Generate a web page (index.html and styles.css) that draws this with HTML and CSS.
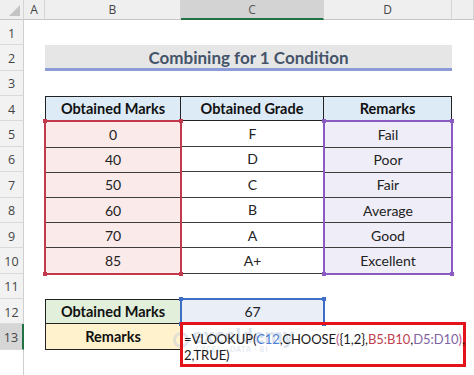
FILE: index.html
```html
<!DOCTYPE html>
<html>
<head>
<meta charset="utf-8">
<link rel="stylesheet" href="styles.css">
</head>
<body>
<div class="sheet">
  <div class="corner"><span class="tri"></span></div>
  <div class="ch">A</div>
  <div class="ch">B</div>
  <div class="ch sel">C</div>
  <div class="ch">D</div>
  <div class="ch"></div>

  <div class="rh">1</div><div class="blank span5"></div>

  <div class="rh">2</div><div class="blank"></div>
  <div class="title">Combining for 1 Condition</div>
  <div class="blank"></div>

  <div class="rh">3</div><div class="blank span5"></div>

  <div class="rh">4</div><div class="blank"></div>
  <div class="th first">Obtained Marks</div>
  <div class="th">Obtained Grade</div>
  <div class="th">Remarks</div>
  <div class="blank"></div>

  <div class="rh">5</div><div class="blank"></div>
  <div class="range red">
    <div class="rc">0</div><div class="rc">40</div><div class="rc">50</div>
    <div class="rc">60</div><div class="rc">70</div><div class="rc last">85</div>
    <span class="h tl"></span><span class="h tr"></span><span class="h bl"></span><span class="h br"></span>
  </div>
  <div class="td">F</div>
  <div class="range purple">
    <div class="rc">Fail</div><div class="rc">Poor</div><div class="rc">Fair</div>
    <div class="rc">Average</div><div class="rc">Good</div><div class="rc last">Excellent</div>
    <span class="h tl"></span><span class="h tr"></span><span class="h bl"></span><span class="h br"></span>
  </div>
  <div class="blank"></div>

  <div class="rh">6</div><div class="blank"></div><div class="td">D</div><div class="blank"></div>
  <div class="rh">7</div><div class="blank"></div><div class="td">C</div><div class="blank"></div>
  <div class="rh">8</div><div class="blank"></div><div class="td">B</div><div class="blank"></div>
  <div class="rh">9</div><div class="blank"></div><div class="td">A</div><div class="blank"></div>
  <div class="rh">10</div><div class="blank"></div><div class="td">A+</div><div class="blank"></div>

  <div class="rh">11</div><div class="blank span5"></div>

  <div class="rh">12</div><div class="blank"></div>
  <div class="lbl green">Obtained Marks</div>
  <div class="range blue">67
    <span class="h tl"></span><span class="h tr"></span><span class="h bl"></span><span class="h br"></span>
  </div>
  <div class="blank span2"></div>

  <div class="rh sel">13</div><div class="blank"></div>
  <div class="lbl yellow">Remarks</div>
  <div class="editcell">
    <div class="watermark">
      <span class="wm-logo"></span>
      <span class="wm-text"><span class="wm-name">exceldemy</span><span class="wm-sub">EXCEL · DATA · BI</span></span>
    </div>
    <div class="editbox">=VLOOKUP(<span class="f-blue">C12</span>,CHOOSE<span class="f-pink">(</span>{1,2},<span class="f-red">B5:B10</span>,<span class="f-purple">D5:D10</span><span class="f-pink">)</span>,<br>2,TRUE)</div>
  </div>
  <div class="blank span2"></div>

  <div class="rh empty"></div><div class="blank span5"></div>
</div>
</body>
</html>
```

FILE: styles.css
```css
* { box-sizing: border-box; margin: 0; padding: 0; }

body {
  margin: 0;
  width: 474px;
  height: 375px;
  overflow: hidden;
  background: #fff;
  font-family: Lato, "Open Sans", "Liberation Sans", sans-serif;
  color: #1f1f1f;
}

.sheet {
  display: grid;
  grid-template-columns: 24px 21px 136px 143px 128px 22px;
  grid-template-rows: 20px repeat(14, 1fr);
  height: 375px;
}

.corner {
  background: #efefef;
  border-right: 1px solid #d4d4d4;
  border-bottom: 1px solid #c6c6c6;
  position: relative;
}
.tri {
  position: absolute;
  right: 3px;
  bottom: 3px;
  width: 0;
  height: 0;
  border-left: 11px solid transparent;
  border-bottom: 11px solid #c4c4c4;
}

.ch {
  background: #efefef;
  border-right: 1px solid #d4d4d4;
  border-bottom: 1px solid #c6c6c6;
  font-family: "Open Sans", sans-serif;
  font-size: 12px;
  color: #444;
  display: flex;
  align-items: center;
  justify-content: center;
}
.ch.sel {
  background: #d3d3d3;
  border-bottom: 2px solid #217346;
  color: #555;
}

.rh {
  background: #f2f2f2;
  border-right: 1px solid #cfcfcf;
  border-bottom: 1px solid #dadada;
  font-family: "Open Sans", sans-serif;
  font-size: 12.5px;
  color: #444;
  display: flex;
  align-items: center;
  justify-content: center;
  padding-top: 2px;
}
.rh.sel {
  background: #d6d6d6;
  border-right: 2px solid #217346;
}
.rh.empty {
  background: #fff;
  border-bottom: none;
}

.blank { background: #fff; }
.span5 { grid-column: span 5; }
.span2 { grid-column: span 2; }

.title {
  grid-column: span 3;
  background: #e7e6e6;
  border-bottom: 3px solid #8e9bd9;
  color: #44546a;
  font-weight: 700;
  font-size: 17px;
  display: flex;
  align-items: center;
  justify-content: center;
  padding-top: 1px;
}

.th {
  background: #ddebf7;
  border-top: 1px solid #222;
  border-right: 1px solid #222;
  border-bottom: 1px solid #222;
  font-weight: 700;
  font-size: 14.5px;
  color: #111;
  display: flex;
  align-items: center;
  justify-content: center;
}
.th.first { border-left: 1px solid #222; }

.td {
  border-bottom: 1px solid #3c3c3c;
  font-size: 14px;
  color: #222;
  display: flex;
  align-items: center;
  justify-content: center;
}

.range {
  position: relative;
  margin: -1px;
  border: 2px solid;
  display: flex;
  flex-direction: column;
  z-index: 1;
}
.range.red { grid-row: span 6; border-color: #c2394d; background: #fbeaea; }
.range.purple { grid-row: span 6; border-color: #8a5cc2; background: #efedf7; }
.range.blue {
  border-color: #3f6fc4;
  background: #e9eef7;
  align-items: center;
  justify-content: center;
  font-size: 14px;
  color: #222;
}

.rc {
  flex: 1;
  border-bottom: 1px solid #3c3c3c;
  font-size: 14px;
  color: #222;
  display: flex;
  align-items: center;
  justify-content: center;
}
.rc.last { border-bottom: none; }

.h {
  position: absolute;
  width: 4px;
  height: 4px;
}
.red .h { background: #c2394d; }
.purple .h { background: #8a5cc2; }
.blue .h { background: #3f6fc4; }
.h.tl { top: -3px; left: -3px; }
.h.tr { top: -3px; right: -3px; }
.h.bl { bottom: -3px; left: -3px; }
.h.br { bottom: -3px; right: -3px; }

.lbl {
  border-left: 1px solid #222;
  border-right: 1px solid #222;
  border-bottom: 1px solid #222;
  font-weight: 700;
  font-size: 14.5px;
  color: #111;
  display: flex;
  align-items: center;
  justify-content: center;
}
.lbl.green { background: #e2efda; border-top: 1px solid #222; }
.lbl.yellow { background: #fff2cc; }

.editcell {
  position: relative;
  z-index: 3;
}
.editbox {
  position: absolute;
  left: -1px;
  top: -2px;
  width: 286px;
  height: 45px;
  border: 3px solid #e3121b;
  padding: 6px 0 0 1px;
  font-size: 13px;
  line-height: 16px;
  color: #1a1a1a;
  white-space: nowrap;
  letter-spacing: -0.05px;
}
.f-blue { color: #4e7fd0; }
.f-pink { color: #c0588c; }
.f-red { color: #c0404f; }
.f-purple { color: #8064a2; }

.watermark {
  position: absolute;
  left: -8px;
  top: 3px;
  display: flex;
  align-items: center;
  gap: 3px;
  opacity: 0.4;
  z-index: 0;
}
.wm-logo {
  width: 16px;
  height: 16px;
  border-radius: 50%;
  border: 3px solid #b9c7dc;
}
.wm-text {
  display: flex;
  flex-direction: column;
  line-height: 1;
}
.wm-name {
  font-family: "Open Sans", sans-serif;
  font-weight: 700;
  font-size: 19px;
  color: #a9b9d3;
}
.wm-sub {
  font-size: 7px;
  color: #a9b9d3;
  letter-spacing: 1px;
  padding-left: 4px;
}
```
